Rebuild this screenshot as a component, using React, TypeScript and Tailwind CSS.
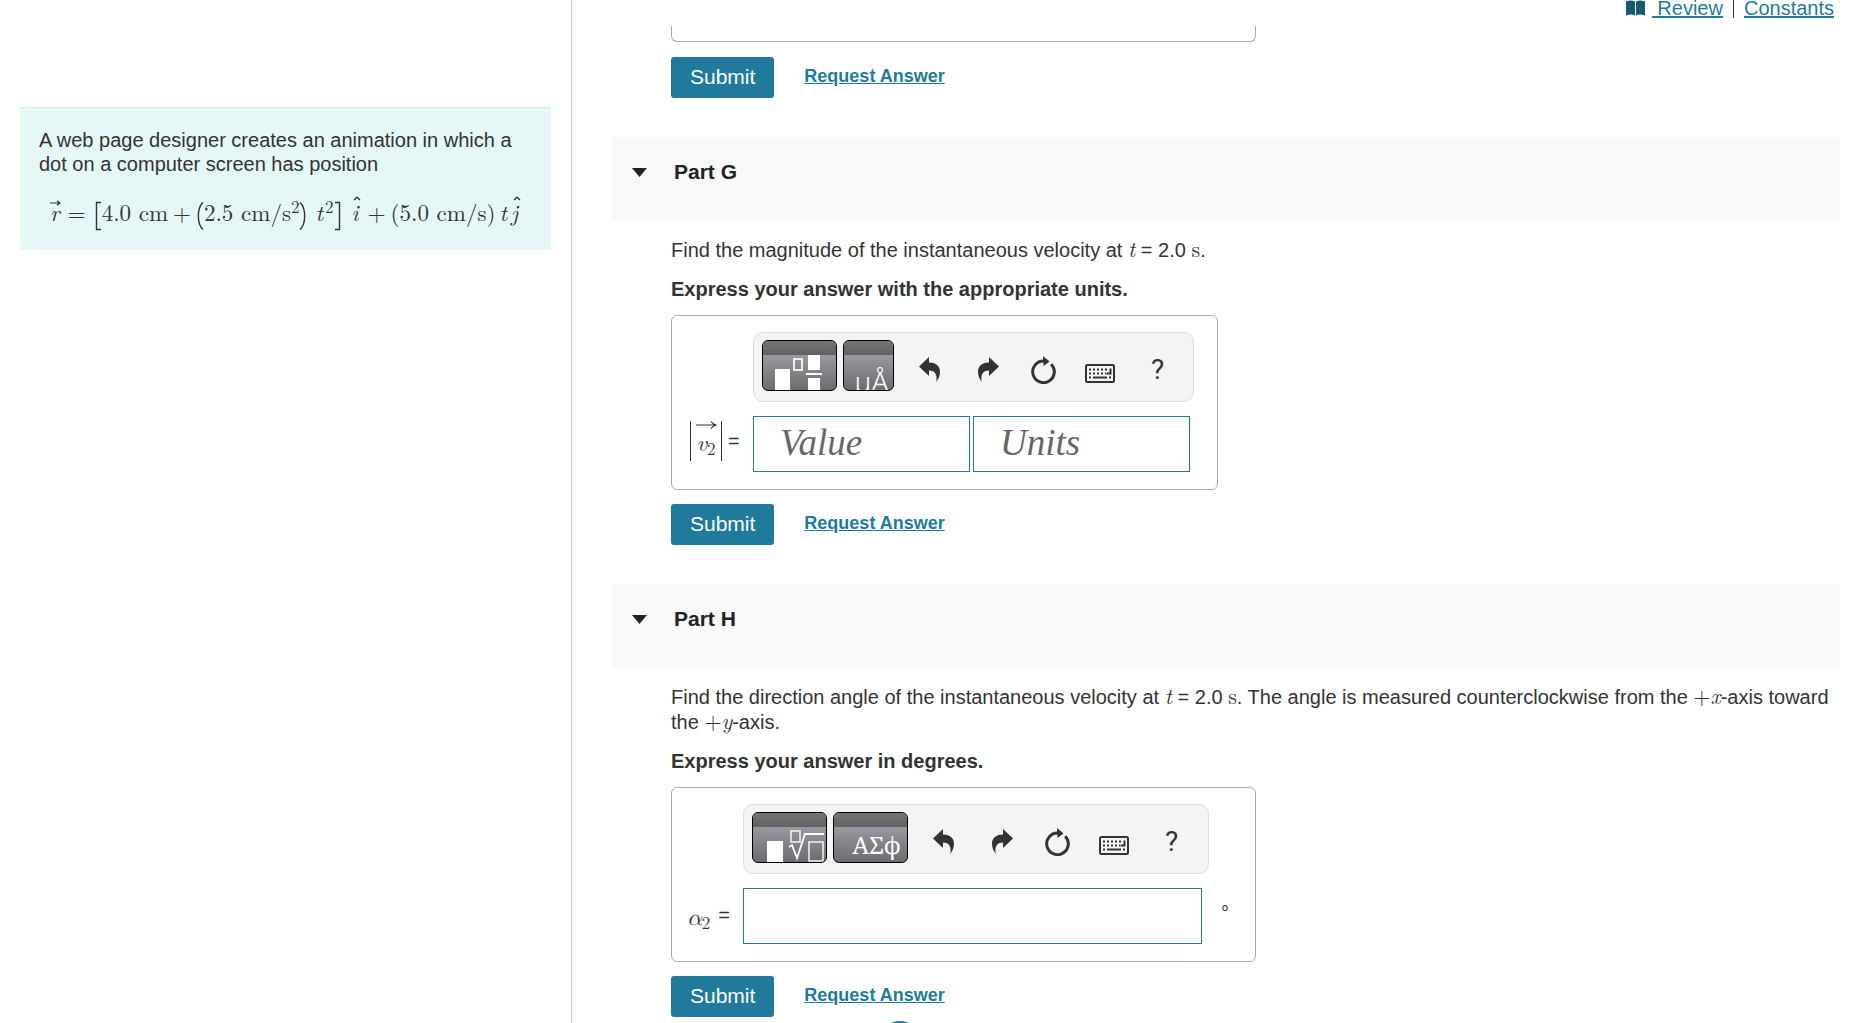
import { useId, type ReactNode } from 'react'

const BODY = 'text-xl leading-6 text-[#333]'

function Math({ children, className = 'text-[22px]' }: { children: ReactNode; className?: string }) {
  return (
    <span
      className={`font-['LM_Roman_10','Latin_Modern_Roman','Latin_Modern_Math','Liberation_Serif',serif] leading-none ${className}`}
    >
      {children}
    </span>
  )
}

function Op({ children }: { children: ReactNode }) {
  return <span className="mx-[5px]">{children}</span>
}

function Accented({ accent, children }: { accent: ReactNode; children: ReactNode }) {
  return (
    <span className="relative inline-block leading-6 italic">
      {children}
      <span className="absolute inset-x-0 top-0 flex justify-center">{accent}</span>
    </span>
  )
}

const hat = (
  <svg className="-mt-1 ml-1 shrink-0" width="8" height="5" viewBox="0 0 8 5" fill="none" stroke="#333" strokeWidth="1.4">
    <path d="M1 4L4 1.2L7 4" />
  </svg>
)

const vecArrow = (
  <svg className="shrink-0" width="12" height="6" viewBox="0 0 12 6" fill="none" stroke="#333" strokeWidth="1.1">
    <path d="M1 3H10.5M8 0.8L11 3L8 5.2" />
  </svg>
)

function Delim({ kind, flip = false }: { kind: 'paren' | 'bracket'; flip?: boolean }) {
  return (
    <svg
      className={flip ? 'mb-1 shrink-0 -scale-x-100 self-center' : 'mb-1 shrink-0 self-center'}
      width="8"
      height="30"
      viewBox="0 0 8 30"
      fill="none"
      stroke="#333"
      strokeWidth="1.4"
    >
      {kind === 'paren' ? <path d="M7 1.5C0.8 7 0.8 23 7 28.5" /> : <path d="M7 1.5H2.5V28.5H7" />}
    </svg>
  )
}

function Toolbar({ children }: { children: ReactNode }) {
  return (
    <div className="flex h-[70px] items-center rounded-[10px] border border-[#dcdcdc] bg-[#f4f4f4] pl-2">
      <div className="mb-1 flex gap-1.5 pt-px">{children}</div>
      <div className="ml-[25px] flex grow items-center pt-1.5">
        <button type="button" aria-label="Undo" className="mr-9">
          <svg width="22" height="26" viewBox="0 0 22 26" fill="#333">
            <path d="M0 9.5L10 0V5.5C17.5 5.5 22 9.5 20.8 17C20.4 20 19 22.5 17.3 25C18.5 18 16.5 13.5 10 13.5V19Z" />
          </svg>
        </button>
        <button type="button" aria-label="Redo" className="mr-8">
          <svg className="-scale-x-100" width="22" height="26" viewBox="0 0 22 26" fill="#333">
            <path d="M0 9.5L10 0V5.5C17.5 5.5 22 9.5 20.8 17C20.4 20 19 22.5 17.3 25C18.5 18 16.5 13.5 10 13.5V19Z" />
          </svg>
        </button>
        <button type="button" aria-label="Reset" className="mr-[29px]">
          <svg width="25" height="28" viewBox="0 0 25 28">
            <path d="M13 5A10.8 10.8 0 1 0 20.2 8.2" fill="none" stroke="#333" strokeWidth="3" />
            <path d="M12 0L18.5 5.5L12.5 10Z" fill="#333" />
          </svg>
        </button>
        <button type="button" aria-label="Keyboard shortcuts" className="mt-1.5 mr-9">
          <svg width="30" height="19" viewBox="0 0 30 19" fill="none" stroke="#333">
            <rect x="1" y="1" width="28" height="17" rx="1.5" strokeWidth="2" />
            <path d="M4 5.5H23M4 9.5H21" strokeWidth="2" strokeDasharray="2 2" />
            <path d="M25.5 4.5V9.5H21.5M4 13.5H6M8 13.5H22M24 13.5H26" strokeWidth="2" />
          </svg>
        </button>
        <button type="button" aria-label="Help" className="font-['Roboto',sans-serif] text-[28px] leading-8 text-[#333]">
          ?
        </button>
      </div>
    </div>
  )
}

function TemplateButton({ label, wide = true, children }: { label: string; wide?: boolean; children: ReactNode }) {
  return (
    <button
      type="button"
      aria-label={label}
      className={`flex h-[51px] flex-col overflow-hidden rounded-md border border-black bg-linear-to-b from-[#99979f] from-30% to-[#6d6c70] ${
        wide ? 'w-[75px]' : 'w-[51px]'
      }`}
    >
      <span className="h-[14px] w-full shrink-0 bg-linear-to-b from-[#747474] to-[#626262]" />
      {children}
    </button>
  )
}

function SubmitRow() {
  return (
    <div className="flex items-center gap-[30px]">
      <button type="submit" className="h-[41px] rounded-[3px] bg-[#1f7a9c] px-[19px] pb-px text-[21px] text-white">
        Submit
      </button>
      <a href="#request" className="mb-1 text-lg font-bold text-[#1f7a9c] underline">
        Request Answer
      </a>
    </div>
  )
}

function Part({ title, children }: { title: string; children: ReactNode }) {
  return (
    <section>
      <h2 className="mt-[39px] flex h-[84px] items-start bg-[#f9f9f9] pt-[23px] pl-[21px] text-[21px] leading-6 font-bold text-[#222]">
        <button type="button" className="flex items-center gap-[27px]">
          <svg width="15" height="9" viewBox="0 0 15 9" fill="#222">
            <path d="M0 0H15L7.5 9Z" />
          </svg>
          {title}
        </button>
      </h2>
      <div className={`pl-[60px] pt-4 ${BODY}`}>{children}</div>
    </section>
  )
}

export default function App() {
  const valueId = useId()
  const unitsId = useId()
  const alphaId = useId()

  return (
    <div className="flex h-screen overflow-hidden bg-white font-['Liberation_Sans',Arial,sans-serif]">
      <aside className="w-[572px] shrink-0 border-r border-[#bccdd8] pt-[107px] pr-5 pl-5">
        <div className={`border-t border-[#d3e3e5] bg-[#e6f7f8] px-[19px] pt-5 pb-[14px] ${BODY}`}>
          <p>A web page designer creates an animation in which a dot on a computer screen has position</p>
          <Math className="mt-5 flex h-10 items-baseline pt-1 pl-[11px] text-[23px] whitespace-nowrap">
            <Accented accent={vecArrow}>r</Accented>
            <span className="mx-2">=</span>
            <Delim kind="bracket" />
            <span>4.0 cm</span>
            <Op>+</Op>
            <Delim kind="paren" />
            <span>
              2.5 cm/s<sup className="text-[17px] leading-none">2</sup>
            </span>
            <Delim kind="paren" flip />
            <span className="ml-2">
              <i className="mr-0.5">t</i>
              <sup className="text-[17px] leading-none">2</sup>
            </span>
            <Delim kind="bracket" flip />
            <span className="mr-1 ml-2.5">
              <Accented accent={hat}>i</Accented>
            </span>
            <Op>+</Op>
            <span>(5.0 cm/s)</span>
            <span className="ml-1">
              <i>t</i>
            </span>
            <span className="ml-1">
              <Accented accent={hat}>j</Accented>
            </span>
          </Math>
        </div>
      </aside>

      <main className="flex min-w-0 grow flex-col pr-[11px] pl-[39px]">
        <header className="flex h-[26px] shrink-0 items-start justify-end pr-1.5 text-xl leading-4 text-[#1f7a9c]">
          <svg className="mr-[7px]" width="19" height="16" viewBox="0 0 19 16" fill="#155a70">
            <path d="M0 1.5Q5 -0.5 9 1.5V15.5Q5 13.5 0 15.5ZM10 1.5Q14 -0.5 19 1.5V15.5Q14 13.5 10 15.5Z" />
          </svg>
          <a href="#review" className="whitespace-pre underline">
            {' Review'}
          </a>
          <span className="mx-2.5 h-[18px] w-px bg-[#333]" />
          <a href="#constants" className="underline">
            Constants
          </a>
        </header>

        <div className="min-h-0 overflow-hidden">
          <div className="pl-[60px]">
            <div className="mb-[15px] h-4 w-[585px] rounded-b-md border border-t-0 border-[#aaa]" />
            <SubmitRow />
          </div>

          <Part title="Part G">
            <p>
              Find the magnitude of the instantaneous velocity at{' '}
              <Math>
                <i>t</i>
              </Math>{' '}
              = 2.0 <Math>s</Math>.
            </p>
            <p className="mt-[15px] font-bold">Express your answer with the appropriate units.</p>
            <div className="mt-[14px] mb-[14px] flex h-[175px] w-[547px] items-start rounded-md border border-[#aaa] pt-4 pr-[23px]">
              <label htmlFor={valueId} className="mt-[89px] flex w-[81px] items-center pl-[18px]">
                <span className="flex h-10 w-8 flex-col items-center border-x border-[#333]">
                  <svg className="shrink-0" width="22" height="9" viewBox="0 2 22 9" fill="none" stroke="#333" strokeWidth="1.2">
                    <path d="M1 6H20.5M16 2.5Q17.5 5 21 6Q17.5 7 16 9.5" />
                  </svg>
                  <Math className="text-[23px] whitespace-nowrap">
                    <i>v</i>
                    <sub className="text-[17px] leading-none">2</sub>
                  </Math>
                </span>
                <span className="ml-1.5">=</span>
              </label>
              <div className="grow">
                <Toolbar>
                  <TemplateButton label="Templates">
                    <svg width="73" height="35" viewBox="0 0 73 35">
                      <path d="M12 14H27V35H12ZM45 0H57V15H45ZM45 23H57V35H45Z" fill="#fff" />
                      <path d="M43 19H59" stroke="#fff" strokeWidth="2" />
                      <rect x="31" y="4" width="8" height="11" fill="none" stroke="#eee" strokeWidth="2" />
                    </svg>
                  </TemplateButton>
                  <TemplateButton label="Units symbols" wide={false}>
                    <span className="pt-3 pl-1.5 font-['Noto_Sans',sans-serif] text-[28px] leading-7 font-light text-white">
                      μÅ
                    </span>
                  </TemplateButton>
                </Toolbar>
                <div className="mt-[14px] flex gap-[3px]">
                  <input
                    id={valueId}
                    placeholder="Value"
                    className="h-14 w-[217px] border border-[#1f7a9c] px-[26px] pb-1 font-['Liberation_Serif',serif] text-[37px] italic placeholder:text-[#666]"
                  />
                  <input
                    id={unitsId}
                    aria-label="Units"
                    placeholder="Units"
                    className="h-14 w-[217px] border border-[#1f7a9c] px-[26px] pb-1 font-['Liberation_Serif',serif] text-[37px] italic placeholder:text-[#666]"
                  />
                </div>
              </div>
            </div>
            <SubmitRow />
          </Part>

          <Part title="Part H">
            <p>
              Find the direction angle of the instantaneous velocity at{' '}
              <Math>
                <i>t</i>
              </Math>{' '}
              = 2.0 <Math>s</Math>. The angle is measured counterclockwise from the{' '}
              <Math>
                +<i>x</i>
              </Math>
              -axis toward the{' '}
              <Math>
                +<i>y</i>
              </Math>
              -axis.
            </p>
            <p className="mt-[15px] font-bold">Express your answer in degrees.</p>
            <div className="mt-[14px] mb-[14px] flex h-[175px] w-[585px] items-start rounded-md border border-[#aaa] pt-4">
              <label htmlFor={alphaId} className="mt-[99px] flex w-[71px] items-center pl-[15px]">
                <Math className="text-[23px]">
                  <i>α</i>
                  <sub className="text-[17px] leading-none">2</sub>
                </Math>
                <span className="ml-2">=</span>
              </label>
              <div className="w-[466px]">
                <Toolbar>
                  <TemplateButton label="Templates">
                    <svg width="73" height="35" viewBox="0 0 73 35" fill="none" stroke="#fff">
                      <path d="M14 14H30V35H14Z" fill="#fff" stroke="none" />
                      <path d="M36 20L39 18L44 31L52 7H71" strokeWidth="1.8" />
                      <rect x="38" y="4" width="9" height="11" strokeWidth="1.6" stroke="#eee" />
                      <rect x="56" y="15" width="14" height="19" strokeWidth="1.6" stroke="#eee" />
                    </svg>
                  </TemplateButton>
                  <TemplateButton label="Greek symbols">
                    <span className="pt-1 pl-3 font-['Noto_Serif','Liberation_Serif',serif] text-2xl leading-7 text-white">
                      ΑΣϕ
                    </span>
                  </TemplateButton>
                </Toolbar>
                <input id={alphaId} className="mt-[14px] block h-14 w-[459px] border border-[#1f7a9c] px-3 text-2xl" />
              </div>
              <span className="mt-[97px] ml-3">°</span>
            </div>
            <SubmitRow />
            <div className="mt-1 ml-[211px] size-9 rounded-full bg-[#1f7a9c]" />
          </Part>
        </div>
      </main>
    </div>
  )
}
